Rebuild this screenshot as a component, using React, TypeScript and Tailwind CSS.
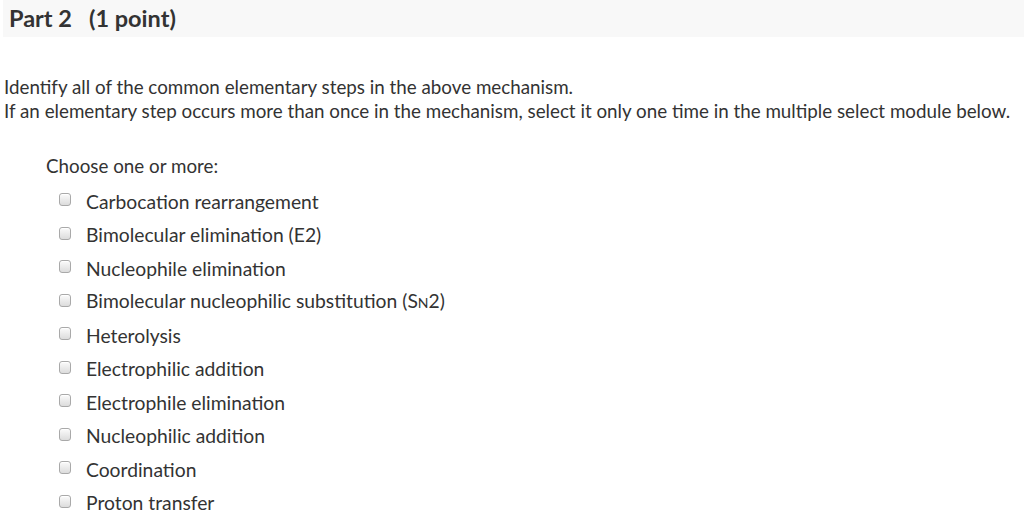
import React from "react";

const options = [
  <>Carbocation rearrangement</>,
  <>Bimolecular elimination (E2)</>,
  <>Nucleophile elimination</>,
  <>Bimolecular nucleophilic substitution (S<span className="text-[14px]">N</span>2)</>,
  <>Heterolysis</>,
  <>Electrophilic addition</>,
  <>Electrophile elimination</>,
  <>Nucleophilic addition</>,
  <>Coordination</>,
  <>Proton transfer</>,
];

function Box() {
  return (
    <span className="inline-block w-[12px] h-[13px] rounded-[3px] border border-[#a9a9a9] bg-gradient-to-b from-[#fbfbfb] to-[#dcdcdc] shadow-[inset_0_1px_0_#fff]" />
  );
}

export default function App() {
  return (
    <div className="bg-white h-[526px] w-[1024px] overflow-hidden text-[#333]" style={{ fontFamily: "Lato, 'Open Sans', sans-serif" }}>
      <div className="ml-[3px] h-[37px] bg-[#f8f8f8] flex items-center pl-[6px] text-[23.5px] font-bold text-[#333]">
        <span>Part 2</span>
        <span className="ml-[17px]">(1 point)</span>
      </div>
      <div className="pl-[4px] pt-[38px] text-[18.8px] leading-[24px]">
        <p>Identify all of the common elementary steps in the above mechanism.</p>
        <p>If an elementary step occurs more than once in the mechanism, select it only one time in the multiple select module below.</p>
      </div>
      <div className="pl-[46px] pt-[31px] text-[18.8px]">
        <div className="leading-[24px]">Choose one or more:</div>
        <div className="flex flex-col mt-[7px] text-[19.3px]">
          {options.map((o, i) => (
            <label key={i} className="flex items-center h-[33.5px]">
              <span className="w-[40px] pl-[13px] flex items-center -mt-[4px]">
                <Box />
              </span>
              <span className="leading-[24px]">{o}</span>
            </label>
          ))}
        </div>
      </div>
    </div>
  );
}
